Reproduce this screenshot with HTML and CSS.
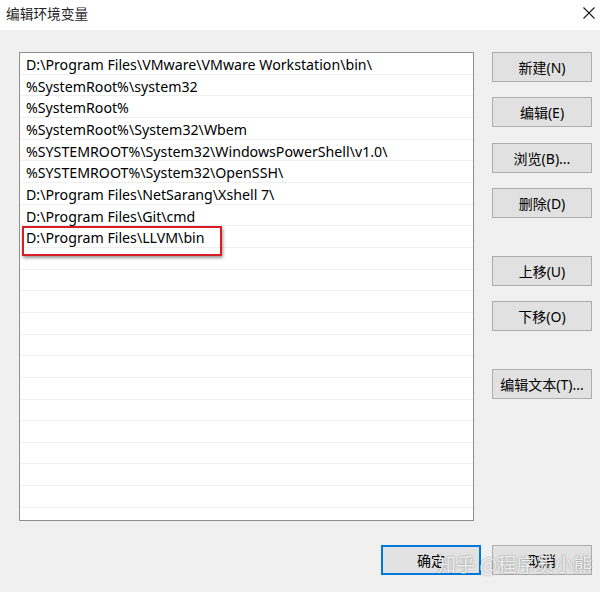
FILE: index.html
```html
<!DOCTYPE html>
<html lang="zh-CN">
<head>
    <meta charset="UTF-8">
    <meta name="viewport" content="width=device-width, initial-scale=1.0">
    <title>编辑环境变量</title>
    <link rel="stylesheet" href="styles.css">
</head>
<body>
    <div class="window">
        <header class="titlebar">
            <span class="title">编辑环境变量</span>
            <svg class="close" viewBox="0 0 12 12" width="12" height="12">
                <path d="M0.5 0.5 L11.5 11.5 M11.5 0.5 L0.5 11.5" stroke="#1a1a1a" stroke-width="1.1" fill="none"/>
            </svg>
        </header>

        <main class="content">
            <div class="main-row">
                <ul class="path-list">
                    <li>D:\Program Files\VMware\VMware Workstation\bin\</li>
                    <li>%SystemRoot%\system32</li>
                    <li>%SystemRoot%</li>
                    <li>%SystemRoot%\System32\Wbem</li>
                    <li>%SYSTEMROOT%\System32\WindowsPowerShell\v1.0\</li>
                    <li>%SYSTEMROOT%\System32\OpenSSH\</li>
                    <li>D:\Program Files\NetSarang\Xshell 7\</li>
                    <li>D:\Program Files\Git\cmd</li>
                    <li>D:\Program Files\LLVM\bin</li>
                    <li></li>
                    <li></li>
                    <li></li>
                    <li></li>
                    <li></li>
                    <li></li>
                    <li></li>
                    <li></li>
                    <li></li>
                    <li></li>
                    <li></li>
                    <li></li>
                    <li></li>
                    <div class="highlight"></div>
                </ul>

                <div class="side">
                    <div class="btn-group">
                        <button class="btn">新建(N)</button>
                        <button class="btn">编辑(E)</button>
                        <button class="btn">浏览(B)...</button>
                        <button class="btn">删除(D)</button>
                    </div>
                    <div class="btn-group">
                        <button class="btn">上移(U)</button>
                        <button class="btn">下移(O)</button>
                    </div>
                    <div class="btn-group">
                        <button class="btn">编辑文本(T)...</button>
                    </div>
                </div>
            </div>

            <div class="footer">
                <button class="btn btn-default">确定</button>
                <button class="btn">取消</button>
            </div>
        </main>

        <div class="watermark">知乎 @程序员小熊</div>
    </div>
</body>
</html>
```

FILE: styles.css
```css
* {
    margin: 0;
    padding: 0;
    box-sizing: border-box;
}

body {
    width: 600px;
    height: 592px;
    overflow: hidden;
    font-family: 'Noto Sans', 'Noto Sans CJK SC', sans-serif;
    font-size: 14.2px;
    color: #000;
    background-color: #f0f0f0;
}

.window {
    position: relative;
    height: 592px;
}

.titlebar {
    height: 30px;
    background-color: #ffffff;
    display: flex;
    align-items: center;
    justify-content: space-between;
    padding: 0 5px 4px 6px;
}

.title {
    font-family: 'Noto Sans CJK SC', sans-serif;
    font-size: 13.7px;
    color: #1f1f1f;
}

.close {
    display: block;
    width: 12px;
    height: 12px;
}

.content {
    padding: 22px 8px 0 19px;
}

.main-row {
    display: flex;
    gap: 18px;
}

.path-list {
    position: relative;
    list-style: none;
    width: 455px;
    height: 469px;
    background-color: #ffffff;
    border: 1px solid #8f8f8f;
    overflow: hidden;
}

.path-list li {
    height: 21.67px;
    line-height: 23px;
    padding-left: 6px;
    border-bottom: 1px solid #eeeeee;
    white-space: nowrap;
}

.highlight {
    position: absolute;
    left: 2px;
    top: 173px;
    width: 200px;
    height: 30px;
    border: 2px solid #d81e25;
    box-shadow: 1px 2px 3px rgba(0, 0, 0, 0.4);
}

.side {
    width: 100px;
    display: flex;
    flex-direction: column;
}

.btn-group {
    display: flex;
    flex-direction: column;
    gap: 15.3px;
    margin-bottom: 38px;
}

.btn {
    height: 30px;
    width: 100px;
    background-color: #e1e1e1;
    border: 1px solid #adadad;
    font-family: 'Noto Sans', 'Noto Sans CJK SC', sans-serif;
    font-size: 14px;
    color: #000;
}

.footer {
    display: flex;
    justify-content: flex-end;
    gap: 11px;
    margin-top: 24px;
}

.btn-default {
    border: 2px solid #0078d7;
}

.watermark {
    position: absolute;
    left: 437px;
    top: 550px;
    font-family: 'Noto Sans CJK SC', sans-serif;
    font-size: 19px;
    color: rgba(255, 255, 255, 0.85);
    text-shadow: 0 0 2px rgba(0, 0, 0, 0.45);
    white-space: nowrap;
}
```
